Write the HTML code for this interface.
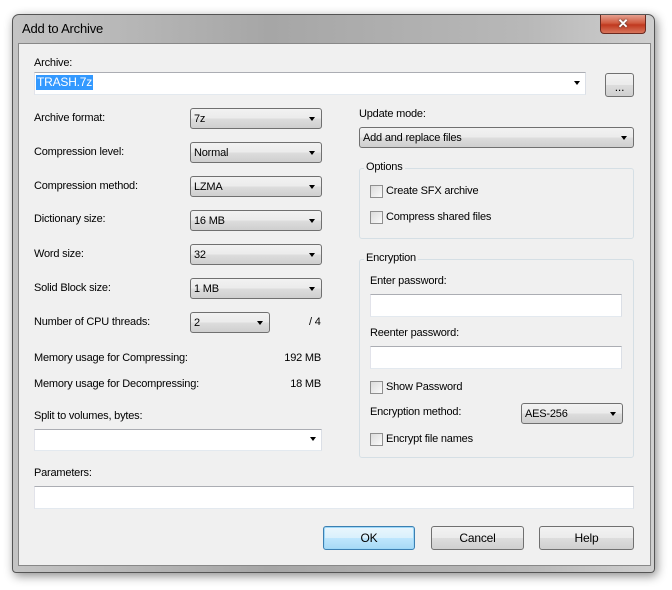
<!DOCTYPE html><html><head><style>
body{margin:0;width:672px;height:590px;background:#fff;position:relative;overflow:hidden;font-family:"Liberation Sans",sans-serif;font-size:11px;letter-spacing:-0.2px;color:#000}
.a{position:absolute}
.win{left:12px;top:14px;width:641px;height:557px;border-radius:7px 7px 4px 4px;border:1px solid #555;background:linear-gradient(90deg,#c4c4c4,#a6a6a6 40%,#b8b8b8 80%,#cfcfcf);box-shadow:2px 3px 10px rgba(0,0,0,.45)}
.client{left:18px;top:43px;width:631px;height:521px;background:#f0f0f0;border:1px solid #888}
.cb{height:19px;border:1px solid #707070;border-radius:3px;background:linear-gradient(#f2f2f2,#ebebeb 50%,#dddddd 51%,#cfcfcf);line-height:20px;padding-left:3px;box-sizing:content-box}
.cb:after{content:"";position:absolute;right:6px;top:8px;border:3.5px solid transparent;border-top:4px solid #000;border-bottom:0}
.ed{background:#fff;border:1px solid #abadb3;border-color:#abadb3 #dbdfe6 #e3e9ef #e2e3ea}
.chk{width:11px;height:11px;border:1px solid #8f8f8f;background:linear-gradient(135deg,#dcdcdc,#fafafa)}
.grp{border:1px solid #d5dfe5;border-radius:3px}
.gl{background:#f0f0f0;padding:0 2px}
.btn{height:22px;border:1px solid #707070;border-radius:3px;background:linear-gradient(#f2f2f2,#ebebeb 50%,#dddddd 51%,#cfcfcf);text-align:center;line-height:22px;font-size:12px}
</style></head><body>
<div class="a win"></div>
<div class="a" style="left:22px;top:21px;font-size:13px;letter-spacing:-0.2px">Add to Archive</div>
<div class="a" style="left:600px;top:15px;width:44px;height:18px;border:1px solid #6b2a20;border-top:0;border-radius:0 0 4px 4px;background:linear-gradient(#e5a090,#d05a3f 45%,#c0391f 55%,#d8755c);color:#fff;text-align:center;font-weight:bold;font-size:13px;line-height:17px;text-shadow:0 0 2px #333">✕</div>
<div class="a client"></div>

<div class="a" style="left:34px;top:57px">Archive:</div>
<div class="a ed" style="left:34px;top:72px;width:550px;height:21px"></div>
<div class="a" style="left:36px;top:75px;background:#3399ff;color:#fff;padding:0 1px;font-size:12px;line-height:15px">TRASH.7z</div>
<div class="a" style="left:574px;top:81px;border:3.5px solid transparent;border-top:4px solid #000;border-bottom:0"></div>
<div class="a btn" style="left:605px;top:73px;width:27px;height:22px;line-height:26px">...</div>

<div class="a" style="left:34px;top:112px">Archive format:</div>
<div class="a cb" style="left:190px;top:108px;width:127px">7z</div>
<div class="a" style="left:34px;top:146px">Compression level:</div>
<div class="a cb" style="left:190px;top:142px;width:127px">Normal</div>
<div class="a" style="left:34px;top:180px">Compression method:</div>
<div class="a cb" style="left:190px;top:176px;width:127px">LZMA</div>
<div class="a" style="left:34px;top:213px">Dictionary size:</div>
<div class="a cb" style="left:190px;top:210px;width:127px">16 MB</div>
<div class="a" style="left:34px;top:248px">Word size:</div>
<div class="a cb" style="left:190px;top:244px;width:127px">32</div>
<div class="a" style="left:34px;top:282px">Solid Block size:</div>
<div class="a cb" style="left:190px;top:278px;width:127px">1 MB</div>
<div class="a" style="left:34px;top:316px">Number of CPU threads:</div>
<div class="a cb" style="left:190px;top:312px;width:75px">2</div>
<div class="a" style="left:309px;top:316px">/ 4</div>
<div class="a" style="left:34px;top:352px">Memory usage for Compressing:</div>
<div class="a" style="left:250px;top:352px;width:71px;text-align:right">192 MB</div>
<div class="a" style="left:34px;top:378px">Memory usage for Decompressing:</div>
<div class="a" style="left:250px;top:378px;width:71px;text-align:right">18 MB</div>
<div class="a" style="left:34px;top:410px">Split to volumes, bytes:</div>
<div class="a ed" style="left:34px;top:429px;width:286px;height:20px"></div>
<div class="a" style="left:310px;top:437px;border:3.5px solid transparent;border-top:4px solid #000;border-bottom:0"></div>
<div class="a" style="left:34px;top:467px">Parameters:</div>
<div class="a ed" style="left:34px;top:486px;width:598px;height:21px"></div>

<div class="a" style="left:359px;top:108px">Update mode:</div>
<div class="a cb" style="left:359px;top:127px;width:270px">Add and replace files</div>

<div class="a grp" style="left:359px;top:168px;width:273px;height:69px"></div>
<div class="a gl" style="left:364px;top:161px">Options</div>
<div class="a chk" style="left:370px;top:185px"></div><div class="a" style="left:386px;top:185px">Create SFX archive</div>
<div class="a chk" style="left:370px;top:211px"></div><div class="a" style="left:386px;top:211px">Compress shared files</div>

<div class="a grp" style="left:359px;top:259px;width:273px;height:197px"></div>
<div class="a gl" style="left:364px;top:252px">Encryption</div>
<div class="a" style="left:370px;top:275px">Enter password:</div>
<div class="a ed" style="left:370px;top:294px;width:250px;height:21px"></div>
<div class="a" style="left:370px;top:327px">Reenter password:</div>
<div class="a ed" style="left:370px;top:346px;width:250px;height:21px"></div>
<div class="a chk" style="left:370px;top:381px"></div><div class="a" style="left:386px;top:381px">Show Password</div>
<div class="a" style="left:370px;top:406px">Encryption method:</div>
<div class="a cb" style="left:521px;top:403px;width:97px">AES-256</div>
<div class="a chk" style="left:370px;top:433px"></div><div class="a" style="left:386px;top:433px">Encrypt file names</div>

<div class="a btn" style="left:323px;top:526px;width:90px;border-color:#3c7fb1;background:linear-gradient(#eaf6fd,#d9f0fc 50%,#bee6fd 51%,#a7d9f5);box-shadow:inset 0 0 0 1px #9ed8f8">OK</div>
<div class="a btn" style="left:431px;top:526px;width:91px">Cancel</div>
<div class="a btn" style="left:539px;top:526px;width:93px">Help</div>
</body></html>
